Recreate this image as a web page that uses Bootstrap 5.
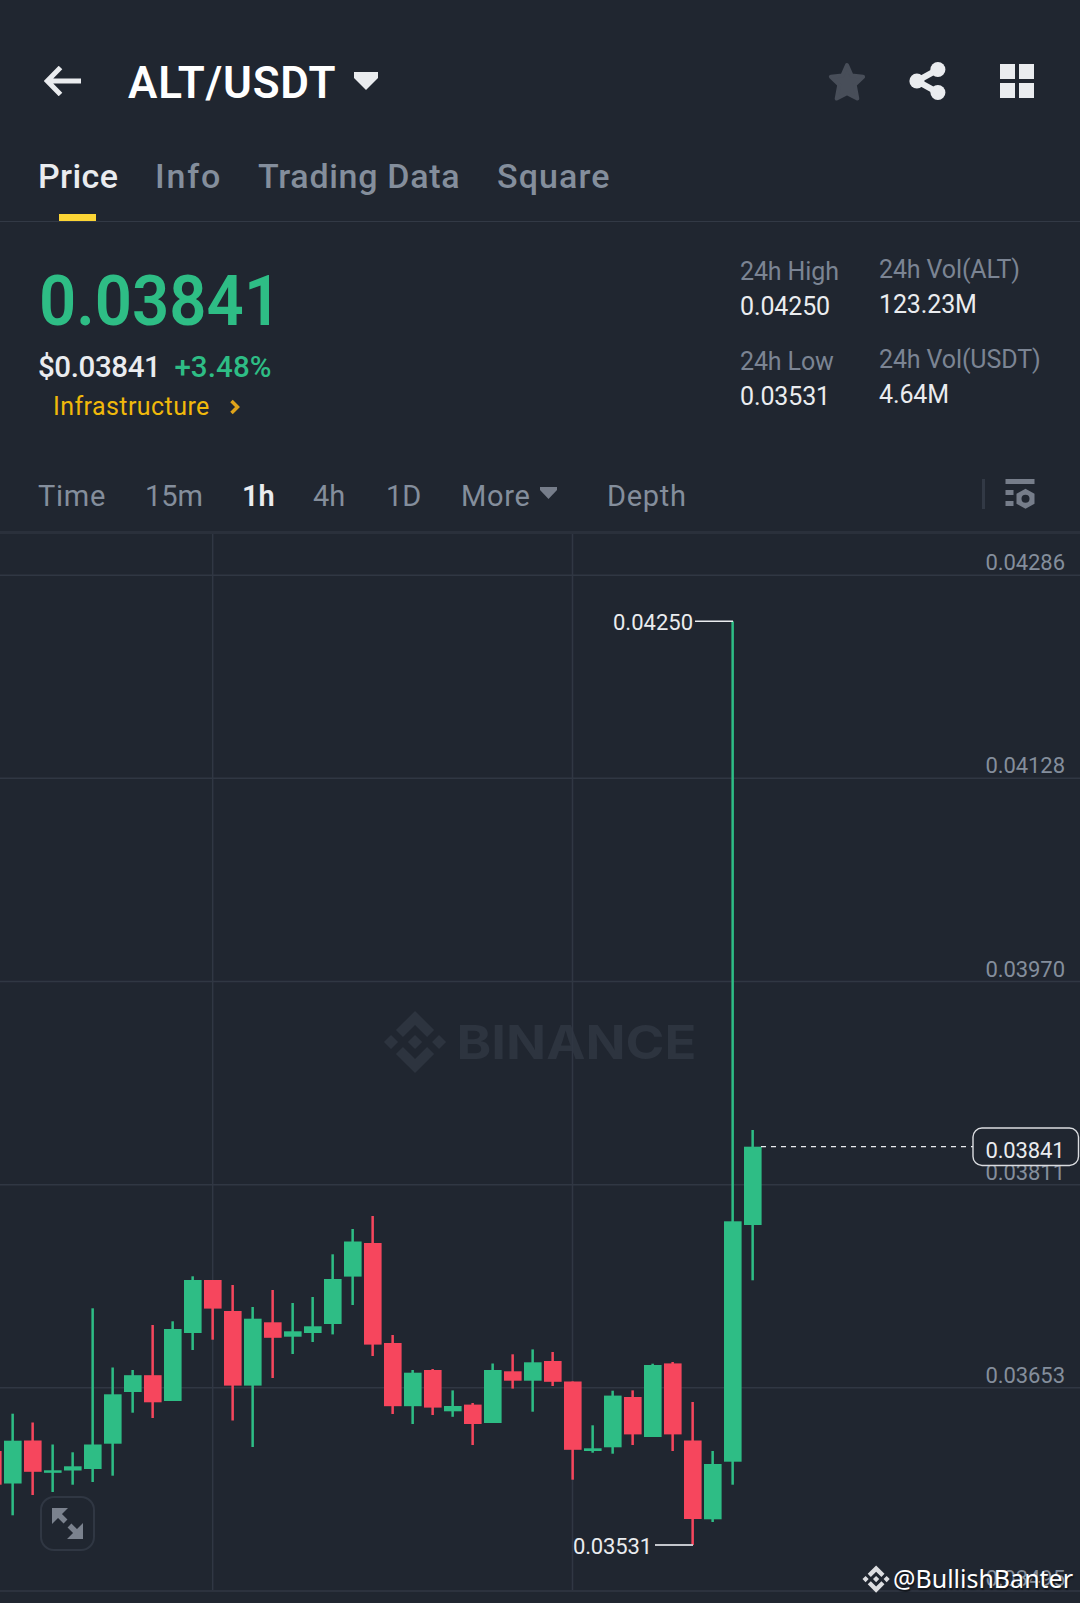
<!DOCTYPE html>
<html lang="en">
<head>
<meta charset="utf-8">
<meta name="viewport" content="width=device-width, initial-scale=1">
<title>ALT/USDT</title>
<link href="https://cdn.jsdelivr.net/npm/bootstrap@5.3.0/dist/css/bootstrap.min.css" rel="stylesheet">
<style>
  body { background:#202630; color:#eaecef; font-family:Roboto,"Noto Sans",sans-serif; width:1080px; height:1603px; overflow:hidden; white-space:nowrap; }
  svg { display:block; flex:none; }
  .topbar { height:132px; padding:29px 46px 0 44px; }
  .pair { font-size:44px; font-weight:600; line-height:60px; letter-spacing:.8px; margin:5px 18px 0 47px; color:#fff; }
  .star-icon { margin-top:2px; }
  .share-icon { margin:0 54px 0 43px; }
  .tabs { display:grid; grid-template-columns:117px 103px 239px 1fr; height:90px; padding-left:38px; border-bottom:1px solid #323945; font-size:34px; font-weight:500; line-height:89px; letter-spacing:.7px; color:#848e9c; }
  .tabs a, .frames a { color:inherit; text-decoration:none; }
  .tabs .active { color:#eaecef; position:relative; letter-spacing:.4px; }
  .tabs .active::after { content:""; position:absolute; left:21px; bottom:0; width:37px; height:7.500px; background:#fcd535; }
  .tabs .wide { letter-spacing:1.800px; }
  .tabs .last { letter-spacing:1.100px; }
  .quote { height:239px; padding-left:39px; }
  .lastprice { margin-top:51px; font-size:70px; font-weight:600; line-height:56px; color:#2ebd85; transform:scaleX(.932); transform-origin:0 0; }
  .fiat { margin:19px 0 0 -1px; gap:14px; font-size:29.500px; font-weight:500; line-height:39px; letter-spacing:-.4px; }
  .up { color:#2ebd85; letter-spacing:.1px; }
  .sector { margin-top:2px; padding-left:14px; gap:20px; font-size:25px; line-height:36px; letter-spacing:.43px; color:#f0b90b; }
  .stats { font-size:25px; line-height:35px; width:139px; letter-spacing:-.12px; padding-top:32px; margin:0 0 0 -1px; }
  .stats + .stats { width:201px; padding-top:30px; margin-left:0; }
  .stats dt { font-weight:400; color:#7b8493; }
  .stats dd { margin:0 0 20px; }
  .frames { height:70px; display:grid; grid-template-columns:107px 97px 71px 73px 75px 146px 375px 22px 1fr; padding-left:38px; align-items:center; font-size:29px; line-height:70px; color:#848e9c; }
  .frames .active { color:#eaecef; font-weight:600; }
  .frames .roomy { letter-spacing:.7px; }
  .caret { margin:0 0 6px 9px; }
  .vsep { width:3px; height:30px; background:#323945; margin-top:-4px; }
  .settings-icon { margin:-3px 0 0 1px; }
  .chart .axis text { font-size:22px; fill:#848e9c; }
  .chart .note { font-size:22px; fill:#eaecef; }
  .author { font-family:"Noto Sans",sans-serif; font-size:25px; fill:#fff; text-shadow:1px 1.500px 1px #11151b; }
  .up-bar { fill:#2ebd85; }
  .down-bar { fill:#f6465d; }
</style>
</head>
<body>
<header class="topbar d-flex align-items-center">
  <svg width="37" height="30" viewBox="44 66.5 37 30" fill="none" stroke="#eaecef" stroke-width="5"><path d="M81 81.500H48M60.500 68 47.300 81.500 60.500 95"/></svg>
  <h1 class="pair">ALT/USDT</h1>
  <svg width="24" height="18" viewBox="0 0 24 18"><path fill="#eaecef" d="M0 0h24v6L12 18 0 6z"/></svg>
  <div class="ms-auto d-flex align-items-center">
    <svg class="star-icon" width="38" height="40" viewBox="0 0 38 40"><path d="M19 3l4.600 10.500 11.500 1.200-8.400 8 2.600 13.800L19 31.200 8.700 36.500l2.600-13.800-8.400-8 11.500-1.200z" fill="#484e59" stroke="#484e59" stroke-width="4" stroke-linejoin="round"/></svg>
    <svg class="share-icon" width="37" height="40" viewBox="909.5 61 37 40" fill="#eaecef"><circle cx="938.400" cy="69.500" r="7.500"/><circle cx="917.400" cy="81" r="7.500"/><circle cx="938.400" cy="92.500" r="7.500"/><path d="M938.400 69.500 917.400 81l21 11.500" fill="none" stroke="#eaecef" stroke-width="6"/></svg>
    <svg width="34" height="34" viewBox="0 0 34 34" fill="#eaecef"><path d="M0 0h15v15H0zM19 0h15v15H19zM0 19h15v15H0zM19 19h15v15H19z"/></svg>
  </div>
</header>
<nav class="tabs"><a class="active" href="#">Price</a><a class="wide" href="#">Info</a><a href="#">Trading Data</a><a class="last" href="#">Square</a></nav>
<section class="quote d-flex">
  <div class="me-auto">
    <div class="lastprice">0.03841</div>
    <div class="fiat d-flex"><span>$0.03841</span><span class="up">+3.48%</span></div>
    <div class="sector d-flex align-items-center"><span>Infrastructure</span><svg width="10" height="16" viewBox="0 0 10 16" fill="none" stroke="#dfa31a" stroke-width="3.500"><path d="M1.500 2 7.500 8l-6 6"/></svg></div>
  </div>
  <dl class="stats"><dt>24h High</dt><dd>0.04250</dd><dt>24h Low</dt><dd>0.03531</dd></dl>
  <dl class="stats"><dt>24h Vol(ALT)</dt><dd>123.23M</dd><dt>24h Vol(USDT)</dt><dd>4.64M</dd></dl>
</section>
<nav class="frames">
  <a class="roomy" href="#">Time</a><a href="#">15m</a><a class="active" href="#">1h</a><a href="#">4h</a><a href="#">1D</a>
  <a class="roomy d-flex align-items-center" href="#">More<svg class="caret" width="17" height="12" viewBox="0 0 17 12"><path fill="#767d8a" d="M0 0h17v3L8.500 12 0 3z"/></svg></a>
  <a class="roomy" href="#">Depth</a>
  <div class="vsep"></div>
  <svg class="settings-icon" width="30" height="31" viewBox="1005 479 30 31" fill="#767d8a"><path d="M1005.500 479h29v5h-29zM1005.500 490h8v5h-8zM1005.500 501h8v5h-8z"/><path fill-rule="evenodd" d="M1025.500 488.800l9 5v10l-9 5-9-5v-10zM1025.500 494.800a4 4 0 1 0 0 8 4 4 0 0 0 0-8z"/></svg>
</nav>
<svg class="chart" width="1080" height="1072" viewBox="0 531 1080 1072">
  <defs>
    <path id="diamonds" d="M38.730 53.200l24.590-24.580 24.600 24.600 14.300-14.310L63.320 0 24.420 38.900zM0 63.310l14.300-14.310 14.310 14.310-14.310 14.300zM38.730 73.410l24.590 24.590 24.600-24.600 14.310 14.290-38.900 38.910-38.930-38.900zM98 63.310l14.300-14.310 14.310 14.300-14.310 14.320zM77.830 63.300 63.320 48.780 48.810 63.280l14.510 14.500z"/>
  </defs>
  <g fill="#2d343f">
    <use href="#diamonds" transform="translate(384 1011) scale(.49)"/>
    <text x="456.500" y="1059" font-family="Inter,sans-serif" font-weight="700" font-size="47" textLength="240" lengthAdjust="spacingAndGlyphs">BINANCE</text>
  </g>
  <path d="M0 532.500H1080" stroke="#2a303b" stroke-width="3"/>
  <path d="M0 575.300H1080M0 778.300H1080M0 981.500H1080M0 1184.700H1080M0 1387.800H1080M0 1591H1080M212.700 534V1590M572.500 534V1590" stroke="#303743" stroke-width="1.500" fill="none"/>
  <g class="axis">
    <text x="985.500" y="570" textLength="79.500">0.04286</text>
    <text x="985.500" y="773" textLength="79.500">0.04128</text>
    <text x="985.500" y="976.500" textLength="79.500">0.03970</text>
    <text x="985.500" y="1180" textLength="79.500">0.03811</text>
    <text x="985.500" y="1383" textLength="79.500">0.03653</text>
    <text x="985.500" y="1586" textLength="79.500">0.03495</text>
  </g>
  <g id="candles"></g>
  <path d="M695 621.300H733" stroke="#eaecef" stroke-width="1.500"/>
  <path d="M655 1545H693" stroke="#c3c6cc" stroke-width="2"/>
  <text class="note" x="613" y="630" textLength="80">0.04250</text>
  <text class="note" x="573" y="1554" textLength="79">0.03531</text>
  <path d="M761 1146.600H973" stroke="#eaecef" stroke-width="1.300" stroke-dasharray="5 5"/>
  <rect x="973" y="1128" width="105.500" height="37.500" rx="9" fill="#202630" stroke="#dadce0" stroke-width="1.400"/>
  <text class="note" x="985.500" y="1158" textLength="79">0.03841</text>
  <rect x="41" y="1497" width="53" height="53" rx="13" fill="#202630" stroke="#303743" stroke-width="2"/>
  <path fill="#7b828e" d="M52 1508h16l-16 16zM83 1539h-16l16-16z"/>
  <path stroke="#7b828e" stroke-width="5.500" d="M57 1513l8.500 8.500M69.500 1525.500l8.500 8.500"/>
  <use href="#diamonds" fill="#dcdde0" transform="translate(862.500 1565.500) scale(.215)"/>
  <text class="author" x="893" y="1588" textLength="180">@BullishBanter</text>
</svg>
<script>
  // Hourly candles in chart units: [direction, high, body top, body bottom, low]
  const candles = [
    ['d',1451,1451,1484.700,1484.700],
    ['u',1413.700,1440.700,1483.500,1515.300],['d',1422.500,1440.500,1471.800,1495],['u',1444.500,1470.300,1472.800,1492],
    ['u',1452.300,1466.300,1470.500,1484.700],['u',1308.300,1444.500,1469,1482],['u',1367.500,1394.300,1443.700,1475.700],
    ['u',1370,1375.200,1392,1412.700],['d',1325,1375.200,1402.300,1418],['u',1321.300,1329,1401,1401],
    ['u',1276.300,1280,1333,1350],['d',1280,1280,1308.600,1339.700],['d',1285,1311,1385.600,1420.500],
    ['u',1307,1318.700,1385.600,1447],['d',1290,1322.300,1337.800,1378],['u',1303,1331.300,1336.700,1354],
    ['u',1297,1326.300,1333,1342],['u',1254.300,1279,1324,1334.400],['u',1229,1241.500,1276.600,1305],
    ['d',1216,1243,1344.600,1356],['d',1335,1343,1406.200,1414],['u',1370,1372.700,1406.200,1424],
    ['d',1369,1370,1407.600,1415],['u',1390.400,1406,1411.300,1416.800],['d',1403,1404.600,1424,1445],
    ['u',1363.500,1370,1423,1423],['d',1354.300,1371.300,1380.700,1388.600],['u',1349.400,1362.300,1380.700,1411.700],
    ['d',1352,1361,1381.800,1386],['d',1381.500,1381.500,1449.800,1479.700],['u',1425.300,1448.300,1451,1452.700],
    ['u',1390.700,1395.600,1447.300,1453.700],['d',1390.400,1397,1434.400,1445],['u',1363.700,1365,1437,1437],
    ['d',1362,1363.400,1434.400,1451],['d',1402,1440.500,1519,1545],['u',1451,1464,1519.300,1522],
    ['u',621.300,1221.300,1461.700,1484.700],['u',1130,1146.700,1225,1280.300]
  ];
  document.getElementById('candles').innerHTML = candles.map(([dir, hi, top, bot, lo], i) => {
    const x = 12.600 + 20 * (i - 1), c = dir === 'u' ? 'up-bar' : 'down-bar';
    return `<rect class="${c}" x="${x - 1.200}" y="${hi}" width="2.500" height="${lo - hi}"/>` +
           `<rect class="${c}" x="${x - 8.600}" y="${top}" width="17.600" height="${bot - top}"/>`;
  }).join('');
</script>
<script src="https://cdn.jsdelivr.net/npm/bootstrap@5.3.0/dist/js/bootstrap.bundle.min.js"></script>
</body>
</html>
